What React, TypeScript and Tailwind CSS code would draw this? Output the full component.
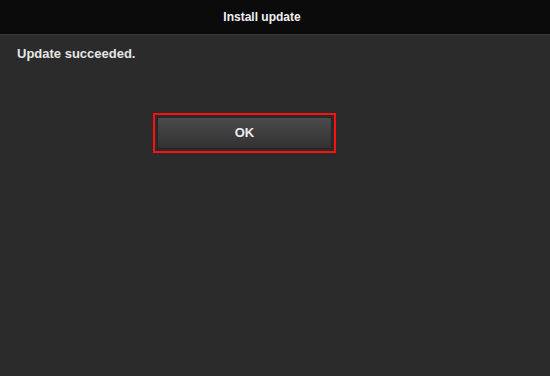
export default function App() {
  return (
    <div
      className="flex h-[376px] w-[550px] flex-col bg-[#2b2b2b] font-bold"
      style={{ fontFamily: '"Liberation Sans", Arial, sans-serif' }}
    >
      <header className="flex h-[35px] shrink-0 items-center justify-center border-b border-[#3a3a3a] bg-[#0a0a0a] pr-[26px] text-[12px] text-[#f0f0f0]">
        Install update
      </header>
      <p className="mt-[9px] pl-[17px] text-[13px] text-[#e6e6e6]">Update succeeded.</p>
      <div className="mt-[49px] ml-[153px] w-[183px] border-2 border-[#ff1010] p-[2px]">
        <button className="flex h-[32px] w-full items-center justify-center border border-[#242424] bg-gradient-to-b from-[#4b4b4b] to-[#323232] text-[13px] font-bold text-[#ececec]">
          OK
        </button>
      </div>
    </div>
  );
}
